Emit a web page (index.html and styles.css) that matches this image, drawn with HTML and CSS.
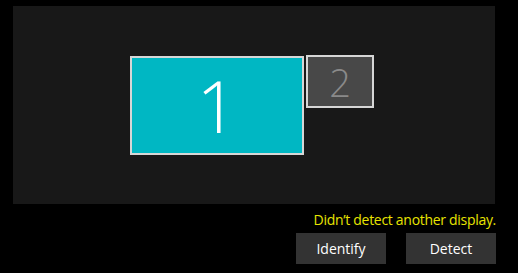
FILE: index.html
```html
<!DOCTYPE html>
<html lang="en">
<head>
    <meta charset="UTF-8">
    <title>Display</title>
    <link rel="stylesheet" href="styles.css">
</head>
<body>
    <div class="settings">
        <div class="arrangement">
            <div class="monitor monitor-main">1</div>
            <div class="monitor monitor-second">2</div>
        </div>
        <div class="message">Didn’t detect another display.</div>
        <div class="actions">
            <button class="btn">Identify</button>
            <button class="btn">Detect</button>
        </div>
    </div>
</body>
</html>
```

FILE: styles.css
```css
body, html {
    margin: 0;
    padding: 0;
    background-color: #000;
    color: #fff;
    font-family: "Open Sans", "Noto Sans", sans-serif;
}

.settings {
    width: 483px;
    padding: 6px 0 0 13px;
}

.arrangement {
    width: 482px;
    height: 198px;
    box-sizing: border-box;
    padding-right: 4px;
    background-color: #181818;
    display: flex;
    justify-content: center;
    align-items: center;
    gap: 2px;
}

.monitor {
    box-sizing: border-box;
    border: 2px solid #d6d6d6;
    display: flex;
    justify-content: center;
    align-items: center;
    font-weight: 300;
}

.monitor-main {
    width: 174px;
    height: 99px;
    background-color: #00b7c3;
    font-size: 72px;
    line-height: 1;
}

.monitor-second {
    width: 68px;
    height: 53px;
    align-self: flex-start;
    margin-top: 49px;
    background-color: #484848;
    color: #8a8a8a;
    font-size: 38px;
    line-height: 1;
}

.message {
    margin-top: 6px;
    text-align: right;
    color: #e8e400;
    font-size: 14px;
    letter-spacing: -0.3px;
    line-height: 20px;
}

.actions {
    margin-top: 3px;
    display: flex;
    justify-content: flex-end;
    gap: 20px;
}

.btn {
    width: 90px;
    height: 31px;
    padding: 0;
    border: none;
    background-color: #333;
    color: #fff;
    font-family: inherit;
    font-size: 14px;
}
```
